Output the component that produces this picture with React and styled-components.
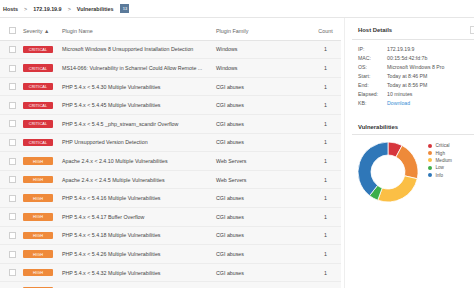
import React from "react";
import styled, { createGlobalStyle } from "styled-components";

const GlobalStyle = createGlobalStyle`
  html, body {
    margin: 0;
    padding: 0;
    background: #fff;
    font-family: "Liberation Sans", Arial, sans-serif;
    color: #444;
    overflow: hidden;
  }
`;

const rows = [
  ["critical", "Microsoft Windows 8 Unsupported Installation Detection", "Windows"],
  ["critical", "MS14-066: Vulnerability in Schannel Could Allow Remote ...", "Windows"],
  ["critical", "PHP 5.4.x < 5.4.30 Multiple Vulnerabilities", "CGI abuses"],
  ["critical", "PHP 5.4.x < 5.4.45 Multiple Vulnerabilities", "CGI abuses"],
  ["critical", "PHP 5.4.x < 5.4.5 _php_stream_scandir Overflow", "CGI abuses"],
  ["critical", "PHP Unsupported Version Detection", "CGI abuses"],
  ["high", "Apache 2.4.x < 2.4.10 Multiple Vulnerabilities", "Web Servers"],
  ["high", "Apache 2.4.x < 2.4.5 Multiple Vulnerabilities", "Web Servers"],
  ["high", "PHP 5.4.x < 5.4.16 Multiple Vulnerabilities", "CGI abuses"],
  ["high", "PHP 5.4.x < 5.4.17 Buffer Overflow", "CGI abuses"],
  ["high", "PHP 5.4.x < 5.4.18 Multiple Vulnerabilities", "CGI abuses"],
  ["high", "PHP 5.4.x < 5.4.26 Multiple Vulnerabilities", "CGI abuses"],
  ["high", "PHP 5.4.x < 5.4.32 Multiple Vulnerabilities", "CGI abuses"],
  ["high", "PHP 5.4.x < 5.4.33 Multiple Vulnerabilities", "CGI abuses"],
];

const details = [
  ["IP:", "172.19.19.9"],
  ["MAC:", "00:15:5d:42:fd:7b"],
  ["OS:", "Microsoft Windows 8 Pro"],
  ["Start:", "Today at 8:46 PM"],
  ["End:", "Today at 8:56 PM"],
  ["Elapsed:", "10 minutes"],
  ["KB:", "Download", true],
];

const slices = [
  { label: "Critical", color: "#d6363d", from: 0, to: 28 },
  { label: "High", color: "#ee8a3a", from: 28, to: 103 },
  { label: "Medium", color: "#fbbf45", from: 103, to: 200 },
  { label: "Low", color: "#3dae4a", from: 200, to: 218 },
  { label: "Info", color: "#2f77b8", from: 218, to: 360 },
];

const Page = styled.div`
  width: 474px;
  height: 288px;
  display: flex;
  flex-direction: column;
`;

const TopBar = styled.div`
  height: 17px;
  flex-shrink: 0;
  border-bottom: 1px solid #e6e6e6;
  display: flex;
  align-items: center;
  gap: 6px;
  padding-left: 3px;
  font-size: 5.4px;
  font-weight: bold;
  color: #333;
`;

const Sep = styled.span`
  color: #666;
  font-weight: normal;
  font-size: 5.4px;
`;

const CountBadge = styled.span`
  width: 9px;
  height: 9px;
  background: #5b7a9a;
  color: #dfe7ef;
  font-size: 4px;
  display: flex;
  align-items: center;
  justify-content: center;
  margin-left: 1px;
`;

const Main = styled.div`
  flex: 1;
  display: flex;
  overflow: hidden;
`;

const Table = styled.div`
  width: 341px;
  flex-shrink: 0;
`;

const Row = styled.div`
  display: grid;
  grid-template-columns: 20px 40px 154px 94px 33px;
  align-items: center;
  height: ${(p) => (p.$head ? "22.7px" : "18.6px")};
  box-sizing: border-box;
  padding-top: ${(p) => (p.$head ? "4px" : "0")};
  background: ${(p) => (p.$head ? "#fff" : "#f7f7f7")};
  border-bottom: 1px solid ${(p) => (p.$head ? "#e4e4e4" : "#ececec")};
  font-size: ${(p) => (p.$head ? "5.4px" : "5.3px")};
  color: ${(p) => (p.$head ? "#666" : "#444")};
  white-space: nowrap;
`;

const Cell = styled.div`
  padding-left: ${(p) => p.$pad || "2px"};
  text-align: ${(p) => (p.$center ? "center" : "left")};
  overflow: hidden;
`;

const Check = styled.span`
  display: block;
  width: 5px;
  height: 5px;
  border: 1px solid #cfcfcf;
  background: #fff;
`;

const Severity = styled.span`
  display: flex;
  align-items: center;
  justify-content: center;
  width: 30px;
  height: 7.5px;
  border-radius: 1px;
  background: ${(p) => (p.$level === "critical" ? "#d9353e" : "#ef8a3b")};
  color: #fff;
  font-size: 3.9px;
  letter-spacing: 0.1px;
`;

const Panel = styled.div`
  flex: 1;
  border-left: 1px solid #eeeeee;
  margin-left: 3px;
  padding-left: 7px;
  display: flex;
  flex-direction: column;
`;

const PanelTitle = styled.div`
  height: ${(p) => (p.$first ? "21.7px" : "16px")};
  box-sizing: border-box;
  padding-top: ${(p) => (p.$first ? "4px" : "0")};
  margin-top: ${(p) => p.$mt || "0"};
  border-bottom: 1px solid #e4e4e4;
  display: flex;
  align-items: center;
  justify-content: space-between;
  padding-left: 6px;
  font-size: 5.9px;
  font-weight: bold;
  color: #333;
`;

const Gear = styled.span`
  width: 4px;
  height: 6px;
  border: 1px solid #d6d6d6;
  border-right: none;
  margin-right: -1px;
`;

const DetailList = styled.div`
  margin-top: 5px;
  padding-left: 6px;
  display: grid;
  grid-template-columns: 29px 1fr;
  grid-auto-rows: 9px;
  align-items: center;
  font-size: 5.2px;
  color: #555;
`;

const Value = styled.span`
  color: ${(p) => (p.$link ? "#3b8ed4" : "#555")};
`;

const ChartRow = styled.div`
  margin-top: 7px;
  padding-left: 5.5px;
  display: flex;
  align-items: flex-start;
  gap: 10px;
`;

const Legend = styled.div`
  display: flex;
  flex-direction: column;
`;

const LegendItem = styled.div`
  height: 7.3px;
  display: flex;
  align-items: center;
  gap: 4px;
  font-size: 4.6px;
  color: #555;
`;

const Dot = styled.span`
  width: 4px;
  height: 4px;
  border-radius: 50%;
  background: ${(p) => p.$color};
`;

const polar = (cx, cy, r, deg) => {
  const a = ((deg - 90) * Math.PI) / 180;
  return [cx + r * Math.cos(a), cy + r * Math.sin(a)];
};

const arcPath = (from, to, R, r) => {
  const c = 30;
  const [x1, y1] = polar(c, c, R, from);
  const [x2, y2] = polar(c, c, R, to);
  const [x3, y3] = polar(c, c, r, to);
  const [x4, y4] = polar(c, c, r, from);
  const large = to - from > 180 ? 1 : 0;
  return `M${x1} ${y1} A${R} ${R} 0 ${large} 1 ${x2} ${y2} L${x3} ${y3} A${r} ${r} 0 ${large} 0 ${x4} ${y4} Z`;
};

const Donut = () => (
  <svg width="60" height="60" viewBox="0 0 60 60">
    {slices.map((s) => (
      <path
        key={s.label}
        d={arcPath(s.from, s.to, 30, 17)}
        fill={s.color}
        stroke="#fff"
        strokeWidth="0.8"
      />
    ))}
  </svg>
);

export default function App() {
  return (
    <Page>
      <GlobalStyle />
      <TopBar>
        <span>Hosts</span>
        <Sep>&gt;</Sep>
        <span>172.19.19.9</span>
        <Sep>&gt;</Sep>
        <span>Vulnerabilities</span>
        <CountBadge>13</CountBadge>
      </TopBar>
      <Main>
        <Table>
          <Row $head>
            <Cell $pad="9px">
              <Check />
            </Cell>
            <Cell $pad="3px">Severity ▲</Cell>
            <Cell>Plugin Name</Cell>
            <Cell>Plugin Family</Cell>
            <Cell $center>Count</Cell>
          </Row>
          {rows.map(([level, name, family], i) => (
            <Row key={i}>
              <Cell $pad="9px">
                <Check />
              </Cell>
              <Cell $pad="3px">
                <Severity $level={level}>{level.toUpperCase()}</Severity>
              </Cell>
              <Cell>{name}</Cell>
              <Cell>{family}</Cell>
              <Cell $center>1</Cell>
            </Row>
          ))}
        </Table>
        <Panel>
          <PanelTitle $first>
            Host Details
            <Gear />
          </PanelTitle>
          <DetailList>
            {details.map(([k, v, link]) => (
              <React.Fragment key={k}>
                <span>{k}</span>
                <Value $link={link}>{v}</Value>
              </React.Fragment>
            ))}
          </DetailList>
          <PanelTitle $mt="11.5px">Vulnerabilities</PanelTitle>
          <ChartRow>
            <Donut />
            <Legend>
              {slices.map((s) => (
                <LegendItem key={s.label}>
                  <Dot $color={s.color} />
                  {s.label}
                </LegendItem>
              ))}
            </Legend>
          </ChartRow>
        </Panel>
      </Main>
    </Page>
  );
}
